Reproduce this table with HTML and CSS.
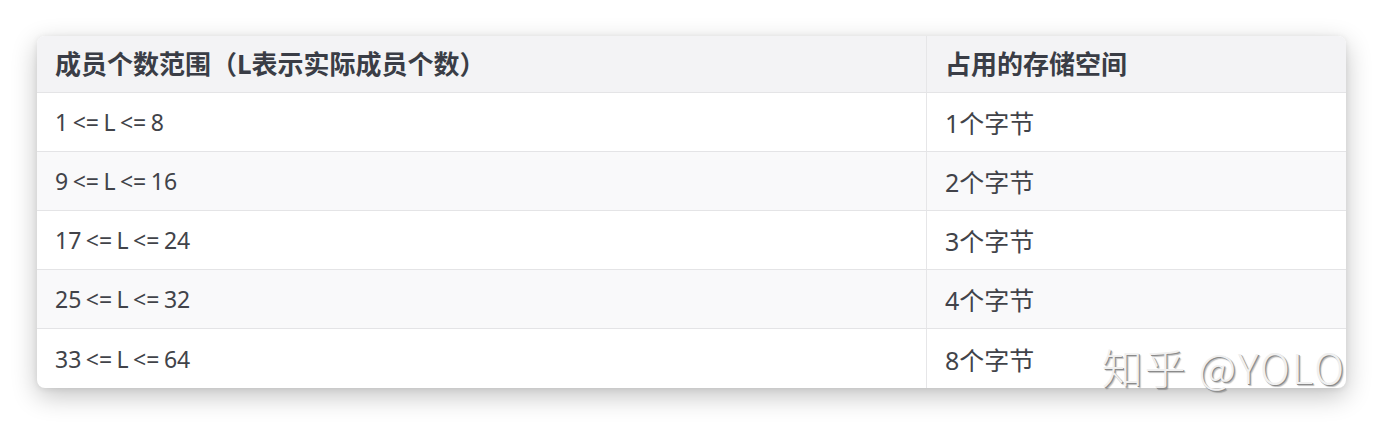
FILE: index.html
```html
<!DOCTYPE html>
<html lang="zh">
<head>
<meta charset="utf-8">
<link rel="stylesheet" href="styles.css">
</head>
<body>
<div class="page">
  <div class="card">
    <div class="row head">
      <div class="cell">成员个数范围（L表示实际成员个数）</div>
      <div class="cell">占用的存储空间</div>
    </div>
    <div class="row">
      <div class="cell num">1 &lt;= L &lt;= 8</div>
      <div class="cell">1个字节</div>
    </div>
    <div class="row alt">
      <div class="cell num">9 &lt;= L &lt;= 16</div>
      <div class="cell">2个字节</div>
    </div>
    <div class="row">
      <div class="cell num">17 &lt;= L &lt;= 24</div>
      <div class="cell">3个字节</div>
    </div>
    <div class="row alt">
      <div class="cell num">25 &lt;= L &lt;= 32</div>
      <div class="cell">4个字节</div>
    </div>
    <div class="row last">
      <div class="cell num">33 &lt;= L &lt;= 64</div>
      <div class="cell">8个字节</div>
    </div>
    <div class="watermark">知乎 @YOLO</div>
  </div>
</div>
</body>
</html>
```

FILE: styles.css
```css
html, body {
  margin: 0;
  padding: 0;
  background: #ffffff;
}
.page {
  padding: 36px 36px 37px 37px;
}
.card {
  position: relative;
  width: 1309px;
  border-radius: 8px;
  background: #ffffff;
  box-shadow: 0 8px 26px rgba(0, 0, 0, 0.24), 0 1px 6px rgba(0, 0, 0, 0.08);
  font-family: "Noto Sans", "Noto Sans CJK SC", sans-serif;
}
.row {
  display: grid;
  grid-template-columns: 889px 1fr;
  height: 59px;
  border-bottom: 1px solid #e4e4e6;
  box-sizing: border-box;
}
.row.last {
  border-bottom: none;
  border-radius: 0 0 8px 8px;
}
.row.head {
  height: 57px;
  background: #f3f3f5;
  border-radius: 8px 8px 0 0;
}
.row.alt {
  background: #f9f9fa;
}
.cell {
  display: flex;
  align-items: center;
  padding: 0 18px;
  font-size: 25px;
  color: #414349;
}
.cell.num {
  font-size: 23px;
  word-spacing: -1.5px;
}
.row.head .cell {
  font-size: 26px;
  font-weight: 700;
  color: #3a3d46;
  padding-bottom: 2px;
}
.cell + .cell {
  border-left: 1px solid #e6e6e8;
}
.watermark {
  position: absolute;
  right: 0;
  bottom: 0;
  font-family: "Noto Sans CJK SC", "Noto Sans", sans-serif;
  font-weight: 300;
  font-size: 41px;
  line-height: 1.05;
  letter-spacing: 2px;
  color: #f0f0f0;
  text-shadow: 1px 1px 0 #8a8a8a, 2px 2px 1px rgba(0, 0, 0, 0.25);
  white-space: nowrap;
}
```
